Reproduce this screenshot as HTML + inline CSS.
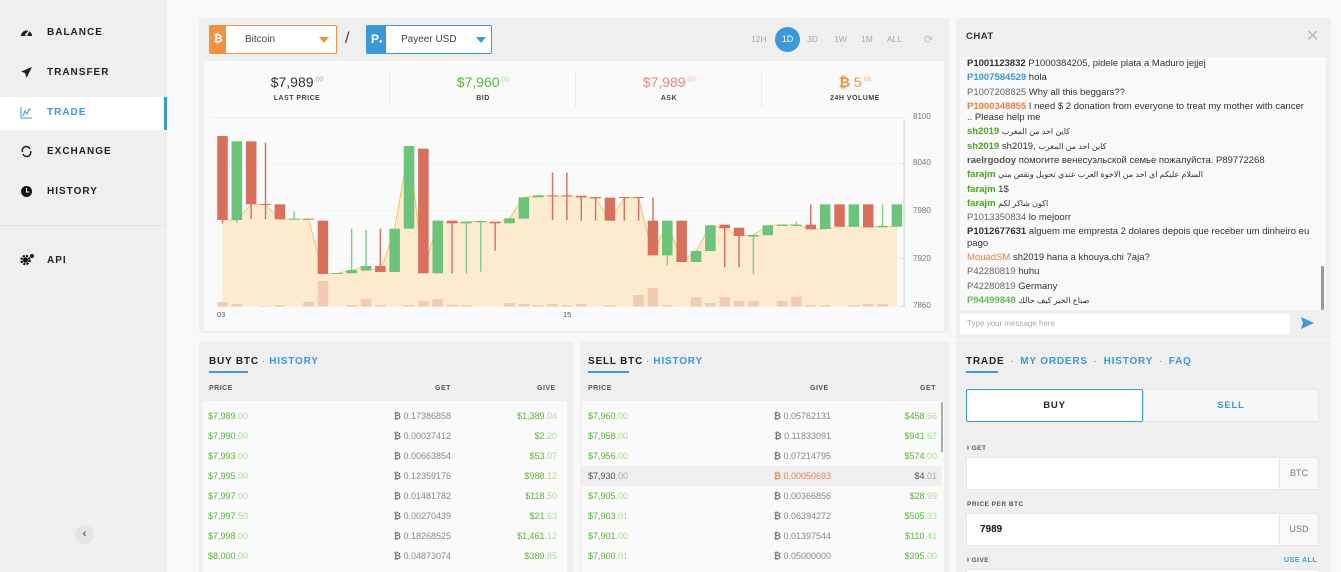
<!DOCTYPE html>
<html style="width:1341px;height:572px;overflow:hidden"><head><meta charset="utf-8"><style>
*{margin:0;padding:0;box-sizing:border-box}
body{width:1341px;height:572px;overflow:hidden;background:#f8f8f8;font-family:"Liberation Sans","Noto Sans CJK SC",sans-serif;position:relative;color:#333}
.a{position:absolute}
.side{left:0;top:0;width:167px;height:572px;background:#efefef}
.nav{position:absolute;left:47px;font-size:10px;font-weight:bold;letter-spacing:1px;color:#222}
.ic{position:absolute;left:20px;width:13px;height:13px}
.panel{background:#efefef;border-radius:3px}
.lab{font-size:7px;font-weight:bold;color:#555;letter-spacing:.5px}
.tab{font-size:10px;font-weight:bold;letter-spacing:.8px}
.row{position:absolute;font-size:9px;height:20px;line-height:20px}
.g{color:#55bb33}.gl{color:#aadd99}
.chat div{position:absolute;left:967px;font-size:9.5px;color:#333;white-space:nowrap}
.chat b{font-weight:bold}
</style></head><body>
<div class="a side"></div>
<svg class="ic" style="top:26px" viewBox="0 0 13 13"><path d="M1 10a5.5 5.5 0 1 1 11 0z" fill="#222"/><circle cx="6.5" cy="8.5" r="1.3" fill="#fff"/><path d="M6.5 8.5L9 5" stroke="#fff" stroke-width="1.2"/></svg>
<div class="nav" style="top:27px">BALANCE</div>
<svg class="ic" style="top:66px" viewBox="0 0 13 13"><path d="M12 1L1 5.5l4 1.5 1.5 5z" fill="#222"/></svg>
<div class="nav" style="top:67px">TRANSFER</div>
<div class="a" style="left:0;top:97px;width:167px;height:33px;background:#fff;border-right:3px solid #3b99d9"></div>
<svg class="ic" style="top:106px" viewBox="0 0 13 13"><path d="M1 1v11h11" stroke="#3b99d9" fill="none"/><path d="M3 10l2-5 2 3 2-5 2 1" stroke="#3b99d9" fill="none"/></svg>
<div class="nav" style="top:107px;color:#3b99d9">TRADE</div>
<svg class="ic" style="top:145px" viewBox="0 0 13 13"><path d="M2.5 7A4 4 0 0 1 10 4M10.5 6A4 4 0 0 1 3 9" stroke="#222" stroke-width="1.5" fill="none"/></svg>
<div class="nav" style="top:146px">EXCHANGE</div>
<svg class="ic" style="top:185px" viewBox="0 0 13 13"><circle cx="6.5" cy="6.5" r="5.5" fill="#111"/><path d="M6.5 3v4h3" stroke="#fff" fill="none"/></svg>
<div class="nav" style="top:186px">HISTORY</div>
<div class="a" style="left:0;top:225px;width:167px;height:1px;background:#e4e4e4"></div>
<svg class="ic" style="top:253px;width:15px" viewBox="0 0 15 13"><circle cx="5.5" cy="7" r="4" fill="none" stroke="#111" stroke-width="2.5" stroke-dasharray="2 1.2"/><circle cx="5.5" cy="7" r="2.5" fill="#111"/><circle cx="12" cy="3" r="2" fill="#111"/></svg>
<div class="nav" style="top:255px">API</div>
<div class="a" style="left:75px;top:525px;width:19px;height:19px;border-radius:50%;background:#e4e4e4;font-size:11px;text-align:center;line-height:19px;color:#333">‹</div>

<div class="a panel" style="left:199px;top:18px;width:750px;height:315px"></div>
<div class="a" style="left:204px;top:61px;width:740px;height:270px;background:#fafafa"></div>
<div class="a" style="left:209px;top:25px;width:128px;height:29px;border:1px solid #f0923e;border-radius:2px;background:#fff"></div>
<div class="a" style="left:210px;top:26px;width:16px;height:27px;background:#f0923e;color:#fff;font-weight:bold;font-size:11px;text-align:center;line-height:27px">₿</div>
<div class="a" style="left:245px;top:34px;font-size:10px;color:#444">Bitcoin</div>
<div class="a" style="left:319px;top:37px;border:5px solid transparent;border-top:6px solid #f0923e;border-bottom:0"></div>
<div class="a" style="left:345px;top:30px;font-size:16px;color:#444">/</div>
<div class="a" style="left:366px;top:25px;width:126px;height:29px;border:1px solid #3b99d9;border-radius:2px;background:#fff"></div>
<div class="a" style="left:367px;top:26px;width:19px;height:27px;background:#3b99d9;color:#fff;font-weight:bold;font-size:12px;line-height:27px;padding-left:4px">P<span style="font-size:6px">●</span></div>
<div class="a" style="left:401px;top:34px;font-size:10px;color:#444">Payeer USD</div>
<div class="a" style="left:476px;top:37px;border:5px solid transparent;border-top:6px solid #3b99d9;border-bottom:0"></div>
<div class="a" style="left:751px;top:34px;font-size:8.5px;color:#aaa">12H</div>
<div class="a" style="left:775px;top:27px;width:25px;height:25px;border-radius:50%;background:#3b99d9;color:#fff;font-size:9px;text-align:center;line-height:25px">1D</div>
<div class="a" style="left:807px;top:34px;font-size:8.5px;color:#aaa">3D</div>
<div class="a" style="left:834px;top:34px;font-size:8.5px;color:#aaa">1W</div>
<div class="a" style="left:861px;top:34px;font-size:8.5px;color:#aaa">1M</div>
<div class="a" style="left:887px;top:34px;font-size:8.5px;color:#aaa">ALL</div>
<div class="a" style="left:924px;top:33px;font-size:11px;color:#bbb">⟳</div>
<div class="a" style="left:389px;top:71px;width:1px;height:36px;background:#eaeaea"></div>
<div class="a" style="left:575px;top:71px;width:1px;height:36px;background:#eaeaea"></div>
<div class="a" style="left:761px;top:71px;width:1px;height:36px;background:#eaeaea"></div>
<div class="a" style="left:204px;top:74px;width:186px;text-align:center;font-size:14px;color:#333">$7,989<sup style="font-size:7px;color:#aaa">.00</sup></div>
<div class="a" style="left:390px;top:74px;width:186px;text-align:center;font-size:14px;color:#55bb33">$7,960<sup style="font-size:7px;color:#aaddaa">.00</sup></div>
<div class="a" style="left:576px;top:74px;width:186px;text-align:center;font-size:14px;color:#ee8877">$7,989<sup style="font-size:7px;color:#f4bbb0">.00</sup></div>
<div class="a" style="left:762px;top:74px;width:186px;text-align:center;font-size:14px;color:#f0923e"><b>₿</b> 5<sup style="font-size:7px;color:#f8bb99">.06</sup></div>
<div class="a lab" style="left:204px;top:95px;width:186px;text-align:center;color:#444">LAST PRICE</div>
<div class="a lab" style="left:390px;top:95px;width:186px;text-align:center;color:#444">BID</div>
<div class="a lab" style="left:576px;top:95px;width:186px;text-align:center;color:#444">ASK</div>
<div class="a lab" style="left:762px;top:95px;width:186px;text-align:center;color:#444">24H VOLUME</div>
<div class="a" style="left:210px;top:117px;width:695px;height:1px;background:#eee"></div>
<svg class="a" style="left:200px;top:120px" width="750" height="210" viewBox="0 0 1568 630" preserveAspectRatio="none">
<g stroke="#f3f3f3" stroke-width="3"><path d="M20 130H1470M20 272H1470M20 415H1470"/></g>
<path d="M1472 -10V560M1462 -10H1472M1462 130H1472M1462 272H1472M1462 415H1472M1462 560H1472" stroke="#ddd" stroke-width="3" fill="none"/>
<polygon fill="#fdebd0" points="47,300 77,300 107,253 137,253 167,298 197,297 227,297 257,462 287,460 317,450 347,438 377,456 407,326 437,78 467,460 497,302 527,310 557,305 587,303 617,310 647,295 677,232 707,226 737,229 767,229 797,232 827,235 857,302 887,234 917,234 947,406 977,302 1007,426 1037,393 1067,316 1097,325 1127,348 1157,345 1187,316 1217,314 1247,314 1277,328 1307,327 1337,320 1367,320 1397,322 1427,318 1457,320 1457,560 47,560"/>
<polyline fill="none" stroke="#f5c060" stroke-width="2" points="47,300 77,300 107,253 137,253 167,298 197,297 227,297 257,462 287,460 317,450 347,438 377,456 407,326 437,78 467,460 497,302 527,310 557,305 587,303 617,310 647,295 677,232 707,226 737,229 767,229 797,232 827,235 857,302 887,234 917,234 947,406 977,302 1007,426 1037,393 1067,316 1097,325 1127,348 1157,345 1187,316 1217,314 1247,314 1277,328 1307,327 1337,320 1367,320 1397,322 1427,318 1457,320"/>
<g fill="#f2cbb0">
<rect x="36" y="546" width="22" height="14"/><rect x="66" y="552" width="22" height="8"/><rect x="126" y="558" width="22" height="2"/><rect x="156" y="556" width="22" height="4"/><rect x="216" y="546" width="22" height="14"/><rect x="246" y="483" width="22" height="77"/><rect x="306" y="555" width="22" height="5"/><rect x="336" y="537" width="22" height="23"/><rect x="366" y="555" width="22" height="5"/><rect x="426" y="555" width="22" height="5"/><rect x="456" y="543" width="22" height="17"/><rect x="486" y="537" width="22" height="23"/><rect x="516" y="554" width="22" height="6"/><rect x="546" y="555" width="22" height="5"/><rect x="636" y="549" width="22" height="11"/><rect x="666" y="552" width="22" height="8"/><rect x="696" y="555" width="22" height="5"/><rect x="726" y="552" width="22" height="8"/><rect x="756" y="555" width="22" height="5"/><rect x="786" y="552" width="22" height="8"/><rect x="846" y="555" width="22" height="5"/><rect x="906" y="525" width="22" height="35"/><rect x="936" y="504" width="22" height="56"/><rect x="966" y="555" width="22" height="5"/><rect x="1026" y="532" width="22" height="28"/><rect x="1056" y="549" width="22" height="11"/><rect x="1086" y="532" width="22" height="28"/><rect x="1116" y="543" width="22" height="17"/><rect x="1146" y="543" width="22" height="17"/><rect x="1206" y="543" width="22" height="17"/><rect x="1236" y="530" width="22" height="30"/><rect x="1266" y="555" width="22" height="5"/><rect x="1296" y="555" width="22" height="5"/><rect x="1356" y="555" width="22" height="5"/><rect x="1386" y="552" width="22" height="8"/><rect x="1416" y="552" width="22" height="8"/>
</g>
<g stroke-width="3">
<path stroke="#d9705e" d="M47 300V310M107 253V297M137 68V297M377 326V456M527 310V460M617 310V392M737 158V300M767 158V300M797 232V302M827 235V302M887 234V302M917 234V302M947 233V406M1097 325V442M1127 348V442M1277 253V328"/>
<path stroke="#7fcf88" d="M77 300V308M197 275V297M317 326V450M347 330V438M557 310V460M587 307V455M977 406V436M1157 350V463M1247 305V314M1427 253V318"/>
</g>
<g fill="#d9705e">
<rect x="36" y="48" width="22" height="252"/><rect x="96" y="64" width="22" height="189"/><rect x="126" y="252" width="22" height="3"/><rect x="156" y="253" width="22" height="45"/><rect x="216" y="296" width="22" height="3"/><rect x="246" y="302" width="22" height="160"/><rect x="366" y="438" width="22" height="18"/><rect x="456" y="86" width="22" height="374"/><rect x="516" y="302" width="22" height="8"/><rect x="606" y="305" width="22" height="5"/><rect x="726" y="226" width="22" height="3"/><rect x="756" y="226" width="22" height="3"/><rect x="786" y="227" width="22" height="5"/><rect x="816" y="231" width="22" height="4"/><rect x="846" y="233" width="22" height="69"/><rect x="876" y="231" width="22" height="3"/><rect x="906" y="231" width="22" height="3"/><rect x="936" y="302" width="22" height="104"/><rect x="996" y="302" width="22" height="124"/><rect x="1086" y="314" width="22" height="11"/><rect x="1116" y="323" width="22" height="25"/><rect x="1266" y="314" width="22" height="14"/><rect x="1326" y="253" width="22" height="67"/><rect x="1386" y="253" width="22" height="69"/>
</g>
<g fill="#6cc47a">
<rect x="66" y="64" width="22" height="236"/><rect x="186" y="296" width="22" height="3"/><rect x="276" y="459" width="22" height="3"/><rect x="306" y="450" width="22" height="10"/><rect x="336" y="438" width="22" height="14"/><rect x="396" y="326" width="22" height="130"/><rect x="426" y="78" width="22" height="248"/><rect x="486" y="302" width="22" height="158"/><rect x="546" y="305" width="22" height="5"/><rect x="576" y="303" width="22" height="4"/><rect x="636" y="295" width="22" height="15"/><rect x="666" y="232" width="22" height="64"/><rect x="696" y="226" width="22" height="6"/><rect x="966" y="302" width="22" height="104"/><rect x="1026" y="393" width="22" height="33"/><rect x="1056" y="316" width="22" height="77"/><rect x="1146" y="345" width="22" height="5"/><rect x="1176" y="316" width="22" height="30"/><rect x="1206" y="314" width="22" height="4"/><rect x="1236" y="314" width="22" height="4"/><rect x="1296" y="253" width="22" height="74"/><rect x="1356" y="253" width="22" height="67"/><rect x="1416" y="318" width="22" height="4"/><rect x="1446" y="253" width="22" height="67"/>
</g>
</svg>
<div class="a" style="left:913px;top:112px;font-size:8px;color:#777;line-height:10px">8100</div>
<div class="a" style="left:913px;top:158px;font-size:8px;color:#777;line-height:10px">8040</div>
<div class="a" style="left:913px;top:206px;font-size:8px;color:#777;line-height:10px">7980</div>
<div class="a" style="left:913px;top:254px;font-size:8px;color:#777;line-height:10px">7920</div>
<div class="a" style="left:913px;top:301px;font-size:8px;color:#777;line-height:10px">7860</div>
<div class="a" style="left:217px;top:310px;font-size:7.5px;color:#555">03</div>
<div class="a" style="left:563px;top:310px;font-size:7.5px;color:#555">15</div>

<div class="a panel" style="left:956px;top:18px;width:375px;height:322px"></div>
<div class="a" style="left:966px;top:31px;font-size:9.5px;font-weight:bold;color:#333;letter-spacing:.5px">CHAT</div>
<div class="a" style="left:1306px;top:26px;font-size:16px;color:#bbb">✕</div>
<div class="a" style="left:960px;top:57px;width:366px;height:253px;background:#f9f9f9"></div>
<div class="a" style="left:1321px;top:266px;width:3px;height:44px;background:#999;border-radius:2px"></div>
<div class="chat">
<div style="top:58px"><b>P1001123832</b> P1000384205, pidele plata a Maduro jejjej</div>
<div style="top:72px"><b style="color:#3b99d9">P1007584529</b> hola</div>
<div style="top:87px"><b style="color:#666;font-weight:normal">P1007208825</b> Why all this beggars??</div>
<div style="top:101px"><b style="color:#f0804a">P1000348855</b> I need $ 2 donation from everyone to treat my mother with cancer</div>
<div style="top:112px">.. Please help me</div>
<div style="top:126px"><b style="color:#44aa22">sh2019</b> <span style="font-size:8px">كاين احد من المغرب</span></div>
<div style="top:141px"><b style="color:#44aa22">sh2019</b> sh2019, <span style="font-size:8px">كاين احد من المغرب</span></div>
<div style="top:155px"><b style="color:#555">raelrgodoy</b> помогите венесуэльской семье пожалуйста. P89772268</div>
<div style="top:169px"><b style="color:#44aa22">farajm</b> <span style="font-size:8px">السلام عليكم اي احد من الاخوة العرب عندي تحويل ونقص مني</span></div>
<div style="top:184px"><b style="color:#44aa22">farajm</b> 1$</div>
<div style="top:198px"><b style="color:#44aa22">farajm</b> <span style="font-size:8px">اكون شاكر لكم</span></div>
<div style="top:212px"><b style="color:#666;font-weight:normal">P1013350834</b> lo mejoorr</div>
<div style="top:226px"><b>P1012677631</b> alguem me empresta 2 dolares depois que receber um dinheiro eu</div>
<div style="top:238px">pago</div>
<div style="top:252px"><b style="color:#f0804a;font-weight:normal">MouadSM</b> sh2019 hana a khouya.chi 7aja?</div>
<div style="top:266px"><b style="color:#666;font-weight:normal">P42280819</b> huhu</div>
<div style="top:281px"><b style="color:#666;font-weight:normal">P42280819</b> Germany</div>
<div style="top:295px"><b style="color:#66bb55">P94499848</b> <span style="font-size:8px">صباح الخير كيف حالك</span></div>
</div>
<div class="a" style="left:960px;top:314px;width:330px;height:20px;background:#fff;font-size:8px;color:#aaa;line-height:20px;padding-left:7px">Type your message here</div>
<svg class="a" style="left:1301px;top:317px" width="13" height="12" viewBox="0 0 13 12"><path d="M0 0L13 6 0 12 2 6z" fill="#3b99d9"/></svg>

<div class="a panel" style="left:199px;top:341px;width:374px;height:231px;border-radius:3px 3px 0 0"></div>
<div class="a tab" style="left:209px;top:356px;color:#222">BUY BTC <span style="color:#3b99d9;font-size:7px">·</span> <span style="color:#3b99d9">HISTORY</span></div>
<div class="a" style="left:209px;top:371px;width:39px;height:2px;background:#3b99d9"></div>
<div class="a lab" style="left:209px;top:385px">PRICE</div>
<div class="a lab" style="left:435px;top:385px">GET</div>
<div class="a lab" style="left:537px;top:385px">GIVE</div>
<div class="a" style="left:203px;top:401px;width:364px;height:171px;background:#fafafa"></div>
<div class="a panel" style="left:580px;top:341px;width:369px;height:231px;border-radius:3px 3px 0 0"></div>
<div class="a tab" style="left:588px;top:356px;color:#222">SELL BTC <span style="color:#3b99d9;font-size:7px">·</span> <span style="color:#3b99d9">HISTORY</span></div>
<div class="a" style="left:588px;top:371px;width:41px;height:2px;background:#3b99d9"></div>
<div class="a lab" style="left:588px;top:385px">PRICE</div>
<div class="a lab" style="left:810px;top:385px">GIVE</div>
<div class="a lab" style="left:920px;top:385px">GET</div>
<div class="a" style="left:582px;top:401px;width:362px;height:171px;background:#fafafa"></div>
<div class="a" style="left:582px;top:466px;width:360px;height:20px;background:#efefef"></div>
<div class="a" style="left:941px;top:402px;width:2px;height:50px;background:#aaa"></div>

<div id="rows"></div>
<script>
var b=[["7,989",".00","0.17386858","$1,389",".04"],["7,990",".00","0.00027412","$2",".20"],["7,993",".00","0.00663854","$53",".07"],["7,995",".00","0.12359176","$988",".12"],["7,997",".00","0.01481782","$118",".50"],["7,997",".50","0.00270439","$21",".63"],["7,998",".00","0.18268525","$1,461",".12"],["8,000",".00","0.04873074","$389",".85"]];
var s=[["7,960",".00","0.05762131","$458",".66"],["7,958",".00","0.11833091","$941",".67"],["7,956",".00","0.07214795","$574",".00"],["7,930",".00","0.00050693","$4",".01"],["7,905",".00","0.00366856","$28",".99"],["7,903",".01","0.06394272","$505",".33"],["7,901",".00","0.01397544","$110",".41"],["7,900",".01","0.05000000","$395",".00"]];
var h="";
function row(d,i,px,gx,gvx,spec){var y=406+i*20;
var pc=spec?"color:#555":"",g2=spec?"color:#f0804a":"color:#888",bc=spec?"#f0923e":"#778";
h+='<div class="row" style="left:'+px+'px;top:'+y+'px"><span class="g" style="'+pc+'">$'+d[0]+'</span><span class="gl" style="'+(spec?"color:#aaa":"")+'">'+d[1]+'</span></div>';
h+='<div class="row" style="right:'+(1341-gx)+'px;top:'+y+'px;'+g2+'"><b style="color:'+bc+'">₿</b> '+d[2]+'</div>';
h+='<div class="row" style="right:'+(1341-gvx)+'px;top:'+y+'px"><span class="g" style="'+pc+'">'+d[3]+'</span><span class="gl" style="'+(spec?"color:#aaa":"")+'">'+d[4]+'</span></div>';}
b.forEach(function(d,i){row(d,i,208,451,557,false)});
s.forEach(function(d,i){row(d,i,588,831,937,i==3)});
document.getElementById("rows").innerHTML=h;
</script>

<div class="a panel" style="left:956px;top:341px;width:375px;height:231px;border-radius:3px 3px 0 0"></div>
<div class="a tab" style="left:966px;top:356px;color:#222">TRADE <span style="color:#3b99d9;font-size:7px">&nbsp;·&nbsp;</span> <span style="color:#3b99d9">MY ORDERS</span> <span style="color:#3b99d9;font-size:7px">&nbsp;·&nbsp;</span> <span style="color:#3b99d9">HISTORY</span> <span style="color:#3b99d9;font-size:7px">&nbsp;·&nbsp;</span> <span style="color:#3b99d9">FAQ</span></div>
<div class="a" style="left:966px;top:371px;width:32px;height:2px;background:#3b99d9"></div>
<div class="a" style="left:966px;top:389px;width:177px;height:33px;background:#fff;border:1px solid #3b99d9;border-radius:2px;text-align:center;line-height:31px;font-size:9.5px;font-weight:bold;letter-spacing:.8px;color:#222">BUY</div>
<div class="a" style="left:1143px;top:389px;width:176px;height:33px;background:#f7f7f7;border:1px solid #e6e6e6;border-radius:2px;text-align:center;line-height:31px;font-size:9.5px;font-weight:bold;letter-spacing:.8px;color:#3b99d9">SELL</div>
<div class="a lab" style="left:967px;top:445px;font-size:6.5px">I GET</div>
<div class="a" style="left:966px;top:457px;width:353px;height:33px;background:#fff;border:1px solid #e6e6e6;border-radius:2px"></div>
<div class="a" style="left:1279px;top:458px;width:39px;height:31px;background:#f8f8f8;border-left:1px solid #e6e6e6;font-size:9px;color:#777;text-align:center;line-height:31px">BTC</div>
<div class="a lab" style="left:967px;top:501px;font-size:6.5px">PRICE PER BTC</div>
<div class="a" style="left:966px;top:513px;width:353px;height:33px;background:#fff;border:1px solid #e6e6e6;border-radius:2px;font-size:10px;font-weight:bold;line-height:31px;padding-left:13px;color:#111">7989</div>
<div class="a" style="left:1279px;top:514px;width:39px;height:31px;background:#f8f8f8;border-left:1px solid #e6e6e6;font-size:9px;color:#777;text-align:center;line-height:31px">USD</div>
<div class="a lab" style="left:967px;top:557px;font-size:6.5px">I GIVE</div>
<div class="a lab" style="left:1284px;top:557px;font-size:7px;color:#3b99d9">USE ALL</div>
<div class="a" style="left:966px;top:569px;width:353px;height:3px;background:#fff;border:1px solid #e6e6e6;border-bottom:0"></div>
</body></html>
